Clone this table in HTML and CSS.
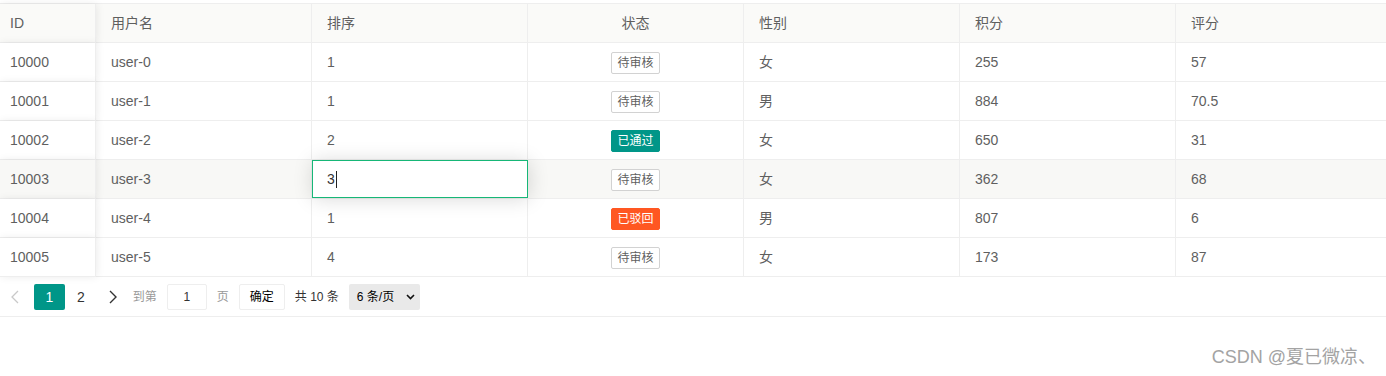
FILE: index.html
```html
<!DOCTYPE html>
<html lang="zh-CN">
<head>
<meta charset="utf-8">
<title>用户表</title>
<link rel="stylesheet" href="styles.css">
</head>
<body>
<div class="page">
  <table class="grid">
    <colgroup>
      <col class="c-id"><col class="c-std"><col class="c-std"><col class="c-std"><col class="c-std"><col class="c-std"><col class="c-last">
    </colgroup>
    <thead>
      <tr>
        <th class="id"><div class="cell">ID</div></th>
        <th><div class="cell">用户名</div></th>
        <th><div class="cell">排序</div></th>
        <th><div class="cell center">状态</div></th>
        <th><div class="cell">性别</div></th>
        <th><div class="cell">积分</div></th>
        <th class="last"><div class="cell">评分</div></th>
      </tr>
    </thead>
    <tbody>
      <tr>
        <td class="id"><div class="cell">10000</div></td>
        <td><div class="cell">user-0</div></td>
        <td><div class="cell">1</div></td>
        <td><div class="cell center"><span class="tag tag-wait">待审核</span></div></td>
        <td><div class="cell">女</div></td>
        <td><div class="cell">255</div></td>
        <td class="last"><div class="cell">57</div></td>
      </tr>
      <tr>
        <td class="id"><div class="cell">10001</div></td>
        <td><div class="cell">user-1</div></td>
        <td><div class="cell">1</div></td>
        <td><div class="cell center"><span class="tag tag-wait">待审核</span></div></td>
        <td><div class="cell">男</div></td>
        <td><div class="cell">884</div></td>
        <td class="last"><div class="cell">70.5</div></td>
      </tr>
      <tr>
        <td class="id"><div class="cell">10002</div></td>
        <td><div class="cell">user-2</div></td>
        <td><div class="cell">2</div></td>
        <td><div class="cell center"><span class="tag tag-pass">已通过</span></div></td>
        <td><div class="cell">女</div></td>
        <td><div class="cell">650</div></td>
        <td class="last"><div class="cell">31</div></td>
      </tr>
      <tr class="hover">
        <td class="id"><div class="cell">10003</div></td>
        <td><div class="cell">user-3</div></td>
        <td class="editing"><div class="cell">3</div><div class="editor">3<span class="caret"></span></div></td>
        <td><div class="cell center"><span class="tag tag-wait">待审核</span></div></td>
        <td><div class="cell">女</div></td>
        <td><div class="cell">362</div></td>
        <td class="last"><div class="cell">68</div></td>
      </tr>
      <tr>
        <td class="id"><div class="cell">10004</div></td>
        <td><div class="cell">user-4</div></td>
        <td><div class="cell">1</div></td>
        <td><div class="cell center"><span class="tag tag-reject">已驳回</span></div></td>
        <td><div class="cell">男</div></td>
        <td><div class="cell">807</div></td>
        <td class="last"><div class="cell">6</div></td>
      </tr>
      <tr>
        <td class="id"><div class="cell">10005</div></td>
        <td><div class="cell">user-5</div></td>
        <td><div class="cell">4</div></td>
        <td><div class="cell center"><span class="tag tag-wait">待审核</span></div></td>
        <td><div class="cell">女</div></td>
        <td><div class="cell">173</div></td>
        <td class="last"><div class="cell">87</div></td>
      </tr>
    </tbody>
  </table>

  <div class="pager">
    <span class="pg-arrow pg-prev"><svg width="8" height="14" viewBox="0 0 8 14"><polyline points="7,1 1,7 7,13" fill="none" stroke="#c9c9c9" stroke-width="1.3"/></svg></span>
    <span class="pg-num pg-curr">1</span>
    <span class="pg-num">2</span>
    <span class="pg-arrow pg-next"><svg width="8" height="14" viewBox="0 0 8 14"><polyline points="1,1 7,7 1,13" fill="none" stroke="#333" stroke-width="1.4"/></svg></span>
    <span class="pg-label">到第</span>
    <span class="pg-input">1</span>
    <span class="pg-label">页</span>
    <span class="pg-btn">确定</span>
    <span class="pg-count">共 10 条</span>
    <span class="pg-select">6 条/页<svg class="pg-chev" width="9" height="6" viewBox="0 0 9 6"><polyline points="1,1 4.5,4.5 8,1" fill="none" stroke="#111" stroke-width="1.6"/></svg></span>
  </div>

  <div class="watermark">CSDN @夏已微凉、</div>
</div>
</body>
</html>
```

FILE: styles.css
```css
html, body {
  margin: 0;
  padding: 0;
  background: #fff;
}

.page {
  padding-top: 3px;
  font-family: "Liberation Sans", "Noto Sans CJK SC", sans-serif;
  font-size: 14px;
  color: #5f5f5f;
}

.grid {
  width: 1386px;
  table-layout: fixed;
  border-collapse: separate;
  border-spacing: 0;
  border-top: 1px solid #eee;
}

.c-id { width: 96px; }
.c-std { width: 216px; }
.c-last { width: 210px; }

.grid th,
.grid td {
  padding: 0;
  border-bottom: 1px solid #eee;
  border-right: 1px solid #eee;
  font-weight: normal;
  text-align: left;
  background: #fff;
}

.grid th {
  background: #fafaf8;
}

.grid .last {
  border-right: none;
}

.grid .id {
  position: relative;
  z-index: 2;
  box-shadow: 1px 0 8px rgba(0, 0, 0, 0.08);
}

.grid .id .cell {
  padding-left: 10px;
}

.grid tr.hover td {
  background: #f8f8f6;
}

.cell {
  height: 38px;
  line-height: 38px;
  padding: 0 15px;
  white-space: nowrap;
  overflow: hidden;
}

.cell.center {
  text-align: center;
}

.tag {
  display: inline-block;
  height: 20px;
  line-height: 20px;
  padding: 0 5px;
  font-size: 12px;
  border: 1px solid transparent;
  border-radius: 2px;
  vertical-align: middle;
  margin-top: -1px;
}

.tag-wait {
  border-color: #d2d2d2;
  color: #5f5f5f;
  background: #fff;
}

.tag-pass {
  background: #009688;
  border-color: #009688;
  color: #fff;
}

.tag-reject {
  background: #ff5722;
  border-color: #ff5722;
  color: #fff;
}

.editing {
  position: relative;
}

.editor {
  position: absolute;
  left: 0;
  top: 0;
  width: 216px;
  height: 38px;
  box-sizing: border-box;
  border: 1px solid #16b777;
  background: #fff;
  padding-left: 14px;
  line-height: 36px;
  color: #333;
  box-shadow: 1px 1px 20px rgba(0, 0, 0, 0.15);
  z-index: 3;
}

.caret {
  display: inline-block;
  width: 1px;
  height: 17px;
  background: #222;
  vertical-align: middle;
  margin-left: 1px;
  margin-top: -2px;
}

.pager {
  display: flex;
  align-items: flex-start;
  height: 40px;
  padding-top: 7px;
  border-bottom: 1px solid #eee;
  width: 1386px;
  box-sizing: border-box;
  font-size: 12px;
  color: #333;
}

.pager > span {
  height: 26px;
  line-height: 26px;
}

.pg-arrow {
  display: flex;
  align-items: center;
}

.pg-prev {
  margin-left: 11px;
}

.pg-num {
  padding: 0 12px;
  font-size: 14px;
  color: #333;
}

.pg-curr {
  margin-left: 15px;
  width: 31px;
  box-sizing: border-box;
  padding: 0;
  text-align: center;
  background: #009688;
  color: #fff;
  border-radius: 2px;
}

.pg-next {
  margin-left: 12px;
}

.pg-label {
  color: #999;
  font-size: 12px;
  margin-left: 16px;
}

.pg-input {
  margin-left: 10px;
  width: 40px;
  box-sizing: border-box;
  border: 1px solid #eee;
  border-radius: 2px;
  text-align: center;
  color: #333;
  font-size: 12px;
}

.pager > .pg-input,
.pager > .pg-btn {
  line-height: 24px;
}

.pg-input + .pg-label {
  margin-left: 10px;
}

.pg-btn {
  margin-left: 10px;
  width: 46px;
  box-sizing: border-box;
  border: 1px solid #eee;
  border-radius: 2px;
  text-align: center;
  color: #000;
  font-size: 12px;
}

.pg-count {
  margin-left: 10px;
  color: #333;
}

.pg-select {
  margin-left: 10px;
  width: 71px;
  box-sizing: border-box;
  padding-left: 8px;
  background: #e9e9e9;
  border-radius: 2px;
  color: #000;
  display: flex;
  align-items: center;
}

.pg-chev {
  margin-left: 12px;
}

.watermark {
  text-align: right;
  padding-right: 10px;
  margin-top: 25px;
  font-size: 18px;
  color: #a3a3a3;
}
```
